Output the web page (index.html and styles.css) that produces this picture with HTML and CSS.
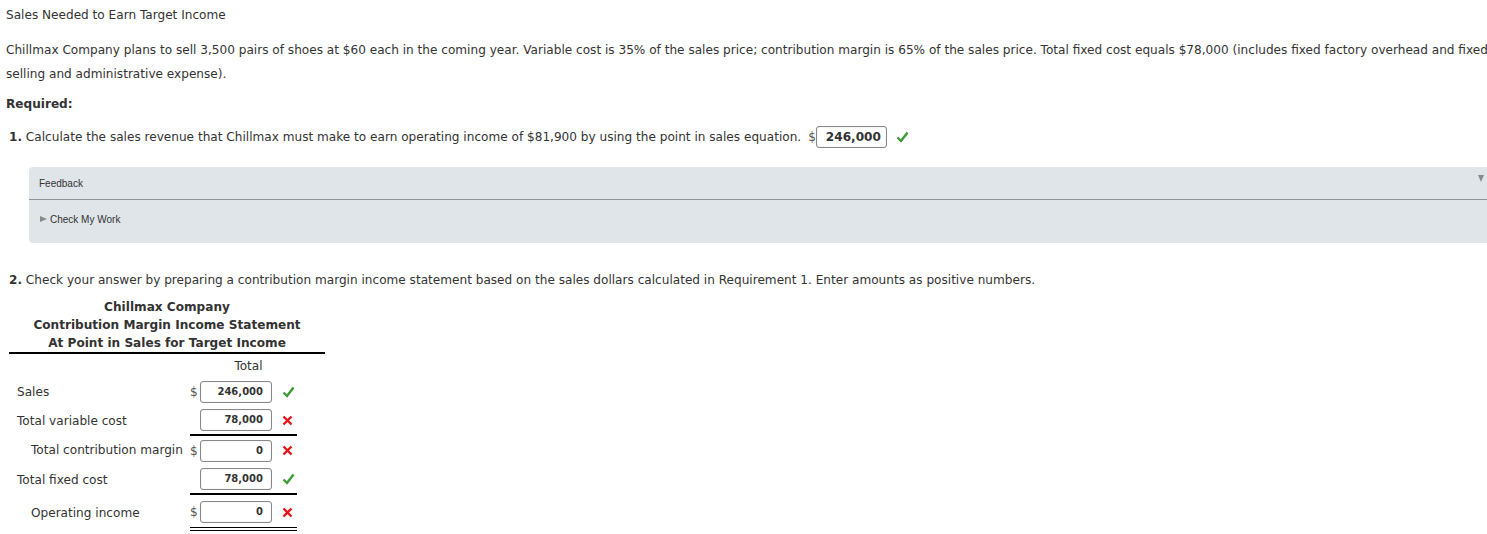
FILE: index.html
```html
<!DOCTYPE html>
<html>
<head>
<meta charset="utf-8">
<link rel="stylesheet" href="styles.css">
</head>
<body>
<div class="page">
  <p class="title">Sales Needed to Earn Target Income</p>
  <p class="intro"><span class="line">Chillmax Company plans to sell 3,500 pairs of shoes at $60 each in the coming year. Variable cost is 35% of the sales price; contribution margin is 65% of the sales price. Total fixed cost equals $78,000 (includes fixed factory overhead and fixed</span><span class="line">selling and administrative expense).</span></p>
  <p class="required">Required:</p>
  <div class="q1">
    <b>1.</b>&nbsp;Calculate the sales revenue that Chillmax must make to earn operating income of $81,900 by using the point in sales equation.
    <span class="dollar">$</span><span class="answer">246,000</span>
    <svg class="mark" width="13" height="12" viewBox="0 0 13 12"><path d="M1.5 6.5 L5 10 L11.5 1.5" fill="none" stroke="#3d9b35" stroke-width="2.4"/></svg>
  </div>
  <div class="feedback">
    <div class="fb-head"><span>Feedback</span><span class="caret"></span></div>
    <div class="fb-body"><span class="tri"></span>Check My Work</div>
  </div>
  <div class="q2"><b>2.</b> Check your answer by preparing a contribution margin income statement based on the sales dollars calculated in Requirement 1. Enter amounts as positive numbers.</div>
  <table class="stmt">
    <colgroup><col class="c-lbl"><col class="c-cur"><col class="c-inp"><col class="c-ic"><col class="c-pad"></colgroup>
    <thead>
      <tr><th colspan="5" class="h">Chillmax Company</th></tr>
      <tr><th colspan="5" class="h">Contribution Margin Income Statement</th></tr>
      <tr><th colspan="5" class="h h3">At Point in Sales for Target Income</th></tr>
      <tr class="trow"><td></td><td></td><td class="tot" colspan="2">Total</td><td></td></tr>
    </thead>
    <tbody>
      <tr class="r1"><td class="lbl">Sales</td><td class="cur">$</td><td class="inp"><span class="box">246,000</span></td><td class="ic"><svg width="13" height="12" viewBox="0 0 13 12"><path d="M1.5 6.5 L5 10 L11.5 1.5" fill="none" stroke="#3d9b35" stroke-width="2.4"/></svg></td><td></td></tr>
      <tr class="r2"><td class="lbl">Total variable cost</td><td class="cur"></td><td class="inp"><span class="box">78,000</span></td><td class="ic"><svg width="11" height="11" viewBox="0 0 11 11"><path d="M1.5 1.5 L9.5 9.5 M9.5 1.5 L1.5 9.5" fill="none" stroke="#e8141a" stroke-width="2.4"/></svg></td><td></td></tr>
      <tr class="r3"><td class="lbl ind">Total contribution margin</td><td class="cur">$</td><td class="inp"><span class="box">0</span></td><td class="ic"><svg width="11" height="11" viewBox="0 0 11 11"><path d="M1.5 1.5 L9.5 9.5 M9.5 1.5 L1.5 9.5" fill="none" stroke="#e8141a" stroke-width="2.4"/></svg></td><td></td></tr>
      <tr class="r4"><td class="lbl">Total fixed cost</td><td class="cur"></td><td class="inp"><span class="box">78,000</span></td><td class="ic"><svg width="13" height="12" viewBox="0 0 13 12"><path d="M1.5 6.5 L5 10 L11.5 1.5" fill="none" stroke="#3d9b35" stroke-width="2.4"/></svg></td><td></td></tr>
      <tr class="r5"><td class="lbl ind">Operating income</td><td class="cur">$</td><td class="inp"><span class="box">0</span></td><td class="ic"><svg width="11" height="11" viewBox="0 0 11 11"><path d="M1.5 1.5 L9.5 9.5 M9.5 1.5 L1.5 9.5" fill="none" stroke="#e8141a" stroke-width="2.4"/></svg></td><td></td></tr>
    </tbody>
  </table>
</div>
</body>
</html>
```
FILE: styles.css
```css
html, body { margin: 0; padding: 0; background: #fff; overflow: hidden; }
body { font-family: "DejaVu Sans", Verdana, sans-serif; font-size: 12.1px; color: #333; }
.page { padding: 0 0 0 6px; width: 1600px; }
p { margin: 0; }
.title { height: 30px; line-height: 30px; }
.intro { margin-top: 8px; line-height: 24px; }
.intro .line { display: block; white-space: nowrap; }
.required { font-weight: bold; margin-top: 6px; line-height: 24px; }
.q1 { margin: 10px 0 0 3px; height: 22px; display: flex; align-items: center; white-space: nowrap; }
.q1 .dollar { margin-left: 7px; color: #555; }
.answer { display: inline-block; border: 1px solid #888; border-radius: 3px; height: 20px; line-height: 20px; padding: 0 5px 0 9px; font-weight: bold; box-shadow: inset 0 0 1px #bbb; }
.mark { margin-left: 9px; }
.feedback { margin: 19px 0 0 23px; width: 1460px; background: #dfe5e8; border-radius: 4px 0 0 4px; height: 76px; font-family: "Liberation Sans", Arial, sans-serif; font-size: 10px; color: #333; }
.fb-head { display: flex; justify-content: space-between; align-items: center; height: 32px; padding: 0 0 0 10px; border-bottom: 1px solid #8e9496; }
.caret { width: 0; height: 0; border-left: 3.5px solid transparent; border-right: 3.5px solid transparent; border-top: 7px solid #8a8a8a; margin-right: 5px; margin-top: -9px; }
.fb-body { display: flex; align-items: center; height: 38px; padding: 0 0 0 11px; }
.tri { width: 0; height: 0; border-top: 3.5px solid transparent; border-bottom: 3.5px solid transparent; border-left: 7px solid #8a8a8a; margin-right: 3px; }
.q2 { margin: 26px 0 0 3px; height: 22px; line-height: 22px; }
.stmt { margin: 7px 0 0 3px; border-collapse: collapse; width: 316px; table-layout: fixed; }
.c-lbl { width: 181px; }
.c-cur { width: 10px; }
.c-inp { width: 73px; }
.c-ic { width: 24px; }
.c-pad { width: 28px; }
.stmt td, .stmt th { padding: 0; }
.stmt .h { font-weight: bold; text-align: center; height: 18px; line-height: 18px; }
.stmt .h3 { border-bottom: 2px solid #000; }
.stmt .tot { text-align: center; height: 22px; padding-top: 1px; }
.stmt .lbl { padding-left: 8px; white-space: nowrap; }
.stmt .lbl.ind { padding-left: 22px; }
.stmt .cur { color: #555; text-align: left; }
.stmt .ic { padding-left: 9px; }
.ic svg { display: block; }
.box { display: block; box-sizing: border-box; width: 72px; height: 22px; line-height: 20px; border: 1px solid #888; border-radius: 3px; text-align: right; padding-right: 8px; font-size: 10px; font-weight: bold; box-shadow: inset 0 0 1px #bbb; }
.stmt .r1 td, .stmt .r3 td { height: 29px; }
.stmt .r2 td, .stmt .r4 td { height: 28px; }
.stmt .r2 .cur, .stmt .r2 .inp, .stmt .r2 .ic, .stmt .r4 .cur, .stmt .r4 .inp, .stmt .r4 .ic { border-bottom: 2px solid #000; }
.stmt .r5 td { height: 30px; padding-top: 2px; }
.stmt .r5 .cur, .stmt .r5 .inp, .stmt .r5 .ic { border-bottom: 4px double #000; }
```
